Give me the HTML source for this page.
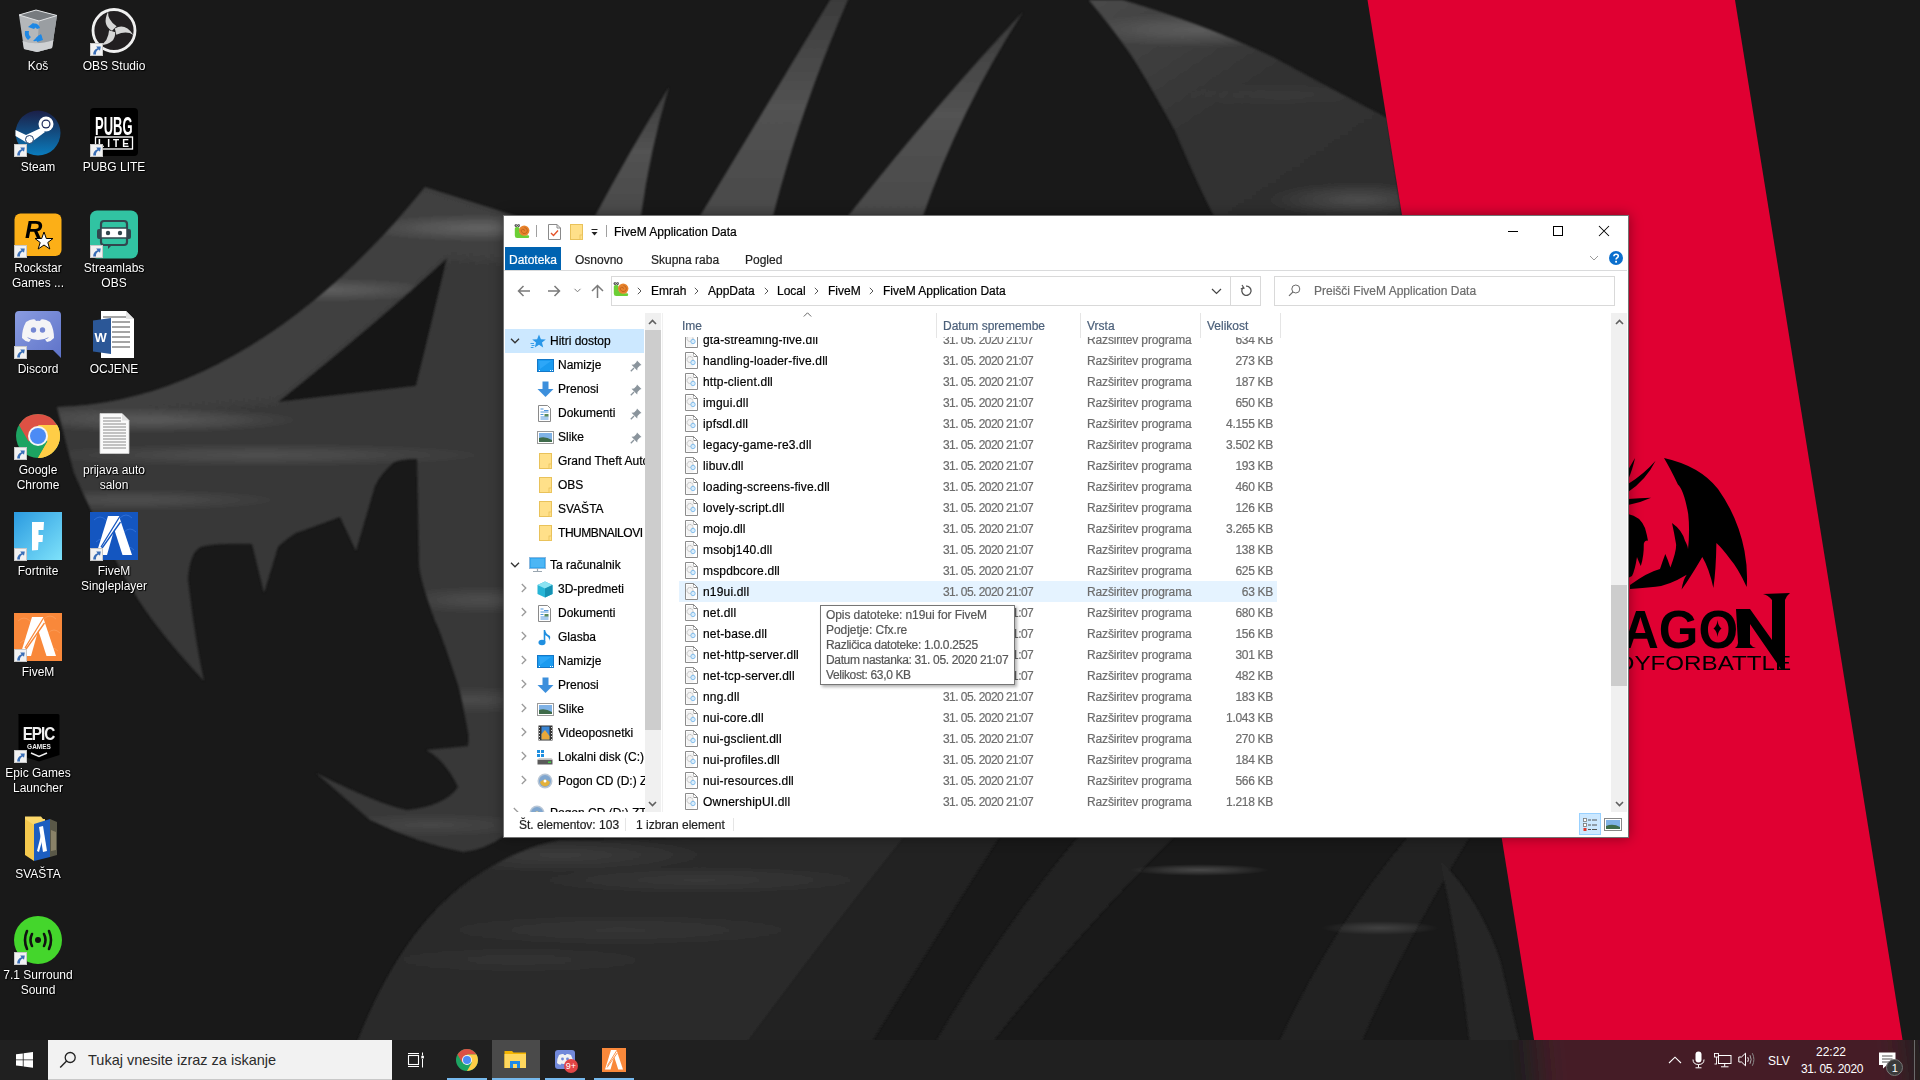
<!DOCTYPE html>
<html><head><meta charset="utf-8">
<style>
*{margin:0;padding:0;box-sizing:border-box}
html,body{width:1920px;height:1080px;overflow:hidden;background:#191919;font-family:"Liberation Sans",sans-serif;font-size:12px;position:relative}
.a{position:absolute;white-space:nowrap}
svg.a{overflow:visible}
.t{position:absolute;white-space:nowrap;line-height:15px;height:15px;-webkit-text-stroke:0.2px currentColor}
.row span{-webkit-text-stroke:0.2px currentColor}
.lbl{position:absolute;width:76px;text-align:center;color:#fff;line-height:15px;text-shadow:0 0 2px #000,1px 1px 1px #000,0 0 1px #000}
.row{position:absolute;left:663px;width:948px;height:21px;line-height:21px}
.row span{top:1px}
.row .n{position:absolute;left:40px;color:#000;letter-spacing:0.17px}
.row .d{position:absolute;left:280px;color:#6d6d6d;letter-spacing:-0.55px}
.row .v{position:absolute;left:424px;color:#6d6d6d;letter-spacing:-0.15px}
.row .s{position:absolute;left:537px;width:73px;text-align:right;color:#6d6d6d;letter-spacing:-0.3px}
.row svg{position:absolute;left:22px;top:2px}
.nv{position:absolute;left:504px;width:141px;height:24px;line-height:24px;color:#000}
.nv .x{position:absolute}
.nv svg{position:absolute}
</style></head><body>
<svg class="a" style="left:0;top:0;overflow:hidden" width="1920" height="1080" viewBox="0 0 1920 1080">
<defs>
<filter id="b1" x="-5%" y="-5%" width="110%" height="110%"><feGaussianBlur stdDeviation="0.8"/></filter>
<filter id="b3" x="-10%" y="-10%" width="120%" height="120%"><feGaussianBlur stdDeviation="4"/></filter>
<filter id="sh" x="-50%" y="-200%" width="200%" height="500%"><feGaussianBlur stdDeviation="22 3"/></filter>
<filter id="b20" x="-50%" y="-50%" width="200%" height="200%"><feGaussianBlur stdDeviation="25"/></filter>
<clipPath id="cg1"><path id="g1p" d="M425 187 L560 230 L560 330 L540 830 L504 836 Q485 850 463 852 Q417 843 370 820 L316 773 Q380 805 407 810 Q445 806 458 787 Q445 760 426 750 L468 746 Q469 735 468 732 Q460 690 458 685 Q440 630 435 621 Q420 580 419 565 L417 459 Q400 459 393 463 Q380 475 375 486 L356 551 L340 517 Q305 530 296 533 Q285 540 278 547 L264 593 L252 544 Q215 543 201 547 Q190 552 188 579 Q195 640 204 681 Q175 650 153 621 Q130 590 111 551 Q90 510 74 473 Q65 440 57 407 C180 405 310 330 425 187 Z"/></clipPath>
<clipPath id="cd"><path d="M1087 -2 L1116 -2 Q1200 22 1273 57 Q1330 88 1387 118 L1402 216 L1214 216 Q1200 190 1175 131 Q1150 85 1131 55 Q1110 25 1087 -2 Z"/></clipPath>
<linearGradient id="gdw" x1="0" y1="0" x2="1" y2="1"><stop offset="0" stop-color="#4a4a4a"/><stop offset="0.45" stop-color="#333"/><stop offset="1" stop-color="#2c2c2c"/></linearGradient>
<linearGradient id="gsp" x1="0" y1="0" x2="0" y2="1">
<stop offset="0" stop-color="#3a3a3a"/><stop offset="0.5" stop-color="#525252"/><stop offset="1" stop-color="#4a4a4a"/></linearGradient>
<radialGradient id="rgw"><stop offset="0" stop-color="#fff" stop-opacity="1"/><stop offset="0.5" stop-color="#fff" stop-opacity="0.55"/><stop offset="1" stop-color="#fff" stop-opacity="0"/></radialGradient>
</defs>
<rect width="1920" height="1080" fill="#191919"/>
<g filter="url(#b1)">
<g clip-path="url(#cg1)">
<rect x="0" y="150" width="600" height="720" fill="#383838"/>
<path d="M425 187 L560 230 L560 262 Q500 262 447 258 Q380 320 278 402 L40 420 L58 380 Z" fill="#404040" filter="url(#b3)"/>
<g><ellipse cx="480" cy="228" rx="120.0" ry="14.0" fill="url(#rgw)" opacity="0.183"/><ellipse cx="330" cy="290" rx="110.0" ry="12.0" fill="url(#rgw)" opacity="0.158"/><ellipse cx="150" cy="420" rx="150.0" ry="13.0" fill="url(#rgw)" opacity="0.173"/><ellipse cx="260" cy="455" rx="230.0" ry="12.0" fill="url(#rgw)" opacity="0.119"/><ellipse cx="130" cy="500" rx="150.0" ry="11.0" fill="url(#rgw)" opacity="0.114"/><ellipse cx="480" cy="600" rx="90.0" ry="14.0" fill="url(#rgw)" opacity="0.104"/><ellipse cx="470" cy="700" rx="90.0" ry="14.0" fill="url(#rgw)" opacity="0.089"/><ellipse cx="430" cy="825" rx="110.0" ry="12.0" fill="url(#rgw)" opacity="0.074"/></g>
</g>
<path d="M447 258 Q430 330 416 386 L278 402 Q380 320 447 258 Z" fill="#191919"/>
<path d="M669 87 Q650 150 641 216 L595 216 Q630 150 669 87 Z" fill="url(#gsp)"/>
<path d="M833 -5 L850 -5 Q800 110 773 216 L700 216 Q770 100 833 -5 Z" fill="url(#gsp)"/>
<path d="M1023 12 Q960 110 923 216 L848 216 Q940 100 1023 12 Z" fill="url(#gsp)"/>
<g clip-path="url(#cd)">
<rect x="1080" y="0" width="330" height="220" fill="url(#gdw)"/>
<g><ellipse cx="1200" cy="30" rx="120.0" ry="18.0" fill="url(#rgw)" opacity="0.160"/><ellipse cx="1290" cy="95" rx="110.0" ry="12.0" fill="url(#rgw)" opacity="0.035"/><ellipse cx="1360" cy="200" rx="90.0" ry="18.0" fill="url(#rgw)" opacity="0.150"/></g>
</g>
</g>
</g>
<!-- lower regions -->
<clipPath id="cl"><path d="M356 1045 Q400 930 470 880 Q520 846 560 840 L905 836 Q830 930 745 1045 Z"/></clipPath>
<g filter="url(#b1)">
<g clip-path="url(#cl)">
<rect x="340" y="830" width="600" height="220" fill="#2b2b2b"/>
<g><ellipse cx="560" cy="855" rx="150.0" ry="18.0" fill="url(#rgw)" opacity="0.080"/><ellipse cx="700" cy="880" rx="170.0" ry="14.0" fill="url(#rgw)" opacity="0.061"/><ellipse cx="620" cy="930" rx="190.0" ry="16.0" fill="url(#rgw)" opacity="0.047"/><ellipse cx="520" cy="960" rx="150.0" ry="14.0" fill="url(#rgw)" opacity="0.033"/></g>
</g>
<path d="M905 836 L1000 836 Q940 930 870 1045 L745 1045 Q830 930 905 836 Z" fill="#202020"/>
</g>
<g filter="url(#b1)">
<path d="M1079 836 L1175 836 Q1080 930 990 1045 L934 1045 Q1000 930 1079 836 Z" fill="#212121"/>
<path d="M1409 836 L1470 836 Q1400 950 1360 1045 L1278 1045 Q1330 930 1409 836 Z" fill="#232323"/>
<path d="M1440 860 Q1480 900 1500 960 L1520 1045 L1470 1045 Q1460 950 1440 860 Z" fill="#262626"/>
</g>
<g><ellipse cx="1200" cy="870" rx="70.0" ry="6.0" fill="url(#rgw)" opacity="0.210"/><ellipse cx="1380" cy="928" rx="60.0" ry="7.0" fill="url(#rgw)" opacity="0.140"/></g>
<polygon points="1367.5,0 1735,0 1909,1080 1540.5,1080" fill="#e00032"/>
<g fill="#000">
<path d="M1664 458 Q1700 466 1718 489 Q1738 517 1744.5 551 Q1748 570 1746.7 587 Q1738 568 1729.7 558.5 Q1722 548 1716.4 543 Q1716 570 1713.4 588 Q1709 568 1702.3 557 Q1690 578 1681.6 589.6 Q1683 580 1686.7 574.8 Q1668 586 1655.6 586.7 Q1642 588 1630 589 L1630 585 Q1648 572 1660 569 Q1663 560 1665.3 554 Q1668 560 1670.4 567.4 Q1677 550 1676 543.7 Q1674 532 1672 523 Q1682 530 1685 540.7 Q1688 546 1688 549.6 Q1690 530 1688.2 514 Q1684 490 1677.9 484.4 Q1670 468 1664 458 Z"/>
<path d="M1635 458 Q1633 468 1628 480 L1628 470 Z"/>
<path d="M1655.6 460.7 Q1646 480 1628 492 L1628 484 Q1644 474 1655.6 460.7 Z"/>
<path d="M1651 497.8 Q1640 503 1628 505 L1628 499 Q1640 498 1651 497.8 Z"/>
<path d="M1628 514 Q1640 516 1645 528 Q1647 535 1648 540.7 Q1645 540 1643.8 543.7 Q1644 556 1640.8 566 Q1638 560 1637 557 Q1635 570 1632 576 L1628 578 Z"/>
<text x="1622" y="648" font-family="Liberation Sans" font-weight="bold" font-size="53" textLength="116" lengthAdjust="spacingAndGlyphs">AGO</text>
<path d="M1736 609 L1750 609 L1772 640 L1772 600 Q1768 595 1763 594 L1790 593 Q1786 596 1785 600 L1785 669 L1781 669 L1750 624 L1750 644 Q1752 647 1756 648 L1735 648 Q1738 646 1738 643 Z"/>
<text x="1617" y="669.8" font-family="Liberation Sans" font-size="21" textLength="174" lengthAdjust="spacingAndGlyphs">DYFORBATTLE</text>
</g>
<path d="M1717.5 620 Q1718 626 1721.5 628.5 Q1718 631 1717.5 637 Q1717 631 1713.5 628.5 Q1717 626 1717.5 620 Z" fill="#000"/>
</svg>
<svg class="a" style="left:14px;top:7px" width="48" height="50" viewBox="0 0 48 50"><path d="M5 8L22 3L43 8.5L38 41L23 45L10 42Z" fill="#b4b7ba"/><path d="M25 14L43 8.5L38 41L23 45Z" fill="#9a9ea2"/><path d="M5 8L22 3L43 8.5L25 14Z" fill="#777b7f" stroke="#e0e2e4" stroke-width="1"/><path d="M8.5 34Q22 39 39.5 33L38 41L23 45L10 42Z" fill="#cfd1d3"/><g fill="#1e88e5"><path d="M14 20L19 16L23 19L20 22Z"/><path d="M11 24Q10 30 14 33L17 30Q14 28 15 24Z"/><path d="M22 31L27 27L29 33L23 35Z"/><path d="M18 17Q24 15 26 21L23 22Z"/><path d="M19 34Q25 35 28 29L25 28Z"/></g></svg>
<div class="lbl" style="left:0px;top:59px">Koš</div>
<svg class="a" style="left:90px;top:7px" width="48" height="50" viewBox="0 0 48 50"><circle cx="24" cy="23.5" r="21" fill="#221f21" stroke="#f0f0f0" stroke-width="2.8"/><g transform="rotate(8 24 23.5)"><path d="M22 24Q11 20 15.5 5.5Q16 14 26 19Z" fill="#d6d6d6"/><g transform="rotate(120 24 23.5)"><path d="M22 24Q11 20 15.5 5.5Q16 14 26 19Z" fill="#d6d6d6"/></g><g transform="rotate(240 24 23.5)"><path d="M22 24Q11 20 15.5 5.5Q16 14 26 19Z" fill="#d6d6d6"/></g></g><g transform="translate(0,36)"><rect x="0.5" y="0.5" width="12" height="12" fill="#f2f2f2" stroke="#c8c8c8"/><path d="M3.2 11.5Q3 7 7.5 5.2L6.2 3.6L10.8 3.5L10 7.8L8.8 6.6Q5.5 8 6 11.5Z" fill="#3a6fb8"/></g></svg>
<div class="lbl" style="left:76px;top:59px">OBS Studio</div>
<svg class="a" style="left:14px;top:108px" width="48" height="50" viewBox="0 0 48 50"><defs><linearGradient id="stg" x1="0" y1="0" x2="0" y2="1"><stop offset="0" stop-color="#1b1f47"/><stop offset="1" stop-color="#0a7cbd"/></linearGradient></defs><circle cx="24" cy="25" r="22.5" fill="url(#stg)"/><circle cx="32" cy="16" r="7.5" fill="#fff"/><circle cx="32" cy="16" r="4.5" fill="#1d2a5a"/><circle cx="32" cy="16" r="3.3" fill="#fff"/><path d="M1.5 22L12 27L27 20L31 24L19 33Q14 37 10 33L1.5 28Z" fill="#fff"/><circle cx="15.5" cy="31.5" r="4" fill="#fff" stroke="#1d3c6a" stroke-width="1"/><g transform="translate(0,36)"><rect x="0.5" y="0.5" width="12" height="12" fill="#f2f2f2" stroke="#c8c8c8"/><path d="M3.2 11.5Q3 7 7.5 5.2L6.2 3.6L10.8 3.5L10 7.8L8.8 6.6Q5.5 8 6 11.5Z" fill="#3a6fb8"/></g></svg>
<div class="lbl" style="left:0px;top:160px">Steam</div>
<svg class="a" style="left:90px;top:108px" width="48" height="50" viewBox="0 0 48 50"><rect x="0" y="0" width="48" height="48" rx="4" fill="#000"/><text x="5" y="26.5" font-family="Liberation Sans" font-weight="bold" font-size="25" fill="#fff" textLength="37.5" lengthAdjust="spacingAndGlyphs">PUBG</text><rect x="5.5" y="29" width="37" height="12" fill="none" stroke="#fff" stroke-width="1.3"/><text x="8" y="38.8" font-family="Liberation Sans" font-weight="bold" font-size="10" fill="#fff" textLength="31" lengthAdjust="spacing">LITE</text><g transform="translate(0,36)"><rect x="0.5" y="0.5" width="12" height="12" fill="#f2f2f2" stroke="#c8c8c8"/><path d="M3.2 11.5Q3 7 7.5 5.2L6.2 3.6L10.8 3.5L10 7.8L8.8 6.6Q5.5 8 6 11.5Z" fill="#3a6fb8"/></g></svg>
<div class="lbl" style="left:76px;top:160px">PUBG LITE</div>
<svg class="a" style="left:14px;top:209px" width="48" height="50" viewBox="0 0 48 50"><rect x="0.5" y="4.5" width="47" height="42.5" rx="6" fill="#fcaf17"/><text x="11" y="29" font-family="Liberation Sans" font-style="italic" font-weight="bold" font-size="24" fill="#000">R</text><path d="M30 23L32.3 29.5L39 29.5L33.8 33.5L35.8 40L30 36L24.2 40L26.2 33.5L21 29.5L27.7 29.5Z" fill="#fff" stroke="#000" stroke-width="1"/><g transform="translate(0,36)"><rect x="0.5" y="0.5" width="12" height="12" fill="#f2f2f2" stroke="#c8c8c8"/><path d="M3.2 11.5Q3 7 7.5 5.2L6.2 3.6L10.8 3.5L10 7.8L8.8 6.6Q5.5 8 6 11.5Z" fill="#3a6fb8"/></g></svg>
<div class="lbl" style="left:0px;top:261px">Rockstar<br>Games ...</div>
<svg class="a" style="left:90px;top:209px" width="48" height="50" viewBox="0 0 48 50"><rect x="0" y="1.5" width="48" height="48" rx="7" fill="#31c3a2"/><rect x="11" y="12" width="26" height="24" rx="3" fill="none" stroke="#32464e" stroke-width="2.2"/><rect x="7" y="20" width="5" height="10" rx="2" fill="#32464e"/><rect x="36" y="20" width="5" height="10" rx="2" fill="#32464e"/><rect x="11" y="19" width="26" height="10" fill="#fff" stroke="#32464e" stroke-width="1.5"/><circle cx="18" cy="24" r="2.2" fill="#32464e"/><circle cx="30" cy="24" r="2.2" fill="#32464e"/><path d="M18 36L18 40L22 36Z" fill="#32464e"/><g transform="translate(0,36)"><rect x="0.5" y="0.5" width="12" height="12" fill="#f2f2f2" stroke="#c8c8c8"/><path d="M3.2 11.5Q3 7 7.5 5.2L6.2 3.6L10.8 3.5L10 7.8L8.8 6.6Q5.5 8 6 11.5Z" fill="#3a6fb8"/></g></svg>
<div class="lbl" style="left:76px;top:261px">Streamlabs<br>OBS</div>
<svg class="a" style="left:14px;top:310px" width="48" height="50" viewBox="0 0 48 50"><defs><linearGradient id="dcg" x1="0" y1="0" x2="1" y2="1"><stop offset="0" stop-color="#8a9ce0"/><stop offset="1" stop-color="#5e73c9"/></linearGradient></defs><path d="M5 1H43Q47 1 47 5V48L39 40H5Q1 40 1 36V5Q1 1 5 1Z" fill="url(#dcg)"/><path d="M12 12Q17 8.5 21 9.5L22 11Q24 10.6 26 11L27 9.5Q31 8.5 36 12Q40 19 40 28Q37 31.5 33 32L31 29.5Q34 28.5 35 27Q30 30 24 30Q18 30 13 27Q14 28.5 17 29.5L15 32Q11 31.5 8 28Q8 19 12 12Z" fill="#f4f4f6"/><circle cx="19.5" cy="20" r="2.7" fill="#7487d3"/><circle cx="28.5" cy="20" r="2.7" fill="#7487d3"/><g transform="translate(0,36)"><rect x="0.5" y="0.5" width="12" height="12" fill="#f2f2f2" stroke="#c8c8c8"/><path d="M3.2 11.5Q3 7 7.5 5.2L6.2 3.6L10.8 3.5L10 7.8L8.8 6.6Q5.5 8 6 11.5Z" fill="#3a6fb8"/></g></svg>
<div class="lbl" style="left:0px;top:362px">Discord</div>
<svg class="a" style="left:90px;top:310px" width="48" height="50" viewBox="0 0 48 50"><path d="M11 1H36L44 9V48H11Z" fill="#fff"/><path d="M36 1V9H44Z" fill="#e6e6e6"/><g stroke="#888" stroke-width="1.3"><path d="M13 7H36M22 12H40M22 17H40M22 22H40M22 27H40M22 32H40M22 37H40"/></g><path d="M3 10.5L21 8V44L3 41.5Z" fill="#2b5797"/><text x="4.5" y="32" font-family="Liberation Sans" font-weight="bold" font-size="13" fill="#fff">W</text></svg>
<div class="lbl" style="left:76px;top:362px">OCJENE</div>
<svg class="a" style="left:14px;top:411px" width="48" height="50" viewBox="0 0 48 50"><circle cx="24" cy="25" r="22" fill="#1da462"/><path d="M24 3A22 22 0 0 1 43 14L24 14Z" fill="#dd5144"/><path d="M5 14A22 22 0 0 1 24 3L24 14L33.5 14L24 25L14.5 30.5Z" fill="#dd5144"/><path d="M43 14A22 22 0 0 1 24 47L33.5 30.5L33.5 14Z" fill="#ffcd46"/><path d="M43 14L24 14L33.5 30.5L24 47A22 22 0 0 0 43 14Z" fill="#ffcd46"/><circle cx="24" cy="25" r="10" fill="#f5f5f5"/><circle cx="24" cy="25" r="8" fill="#4c8bf5"/><g transform="translate(0,36)"><rect x="0.5" y="0.5" width="12" height="12" fill="#f2f2f2" stroke="#c8c8c8"/><path d="M3.2 11.5Q3 7 7.5 5.2L6.2 3.6L10.8 3.5L10 7.8L8.8 6.6Q5.5 8 6 11.5Z" fill="#3a6fb8"/></g></svg>
<div class="lbl" style="left:0px;top:463px">Google<br>Chrome</div>
<svg class="a" style="left:90px;top:411px" width="48" height="50" viewBox="0 0 48 50"><path d="M10 2.5H32L39 9.5V42.5H10Z" fill="#fafafa" stroke="#d0d0d0" stroke-width="0.8"/><path d="M32 2.5V9.5H39Z" fill="#e0e0e0"/><g stroke="#8a8a8a" stroke-width="1"><path d="M13 7H31M13 10H31M13 13H36M13 16H36M13 19H36M13 22H36M13 25H36M13 28H36M13 31H36M13 34H36M13 37H36"/></g></svg>
<div class="lbl" style="left:76px;top:463px">prijava auto<br>salon</div>
<svg class="a" style="left:14px;top:512px" width="48" height="50" viewBox="0 0 48 50"><defs><linearGradient id="fng" x1="0" y1="0" x2="1" y2="1"><stop offset="0" stop-color="#2a9ae0"/><stop offset="1" stop-color="#7ee2fa"/></linearGradient></defs><rect x="0" y="0" width="48" height="48" fill="url(#fng)"/><path d="M18 10H30L29.5 18H24.5L24.5 23H29L28.5 30H24.5L24 38L18 38.5Z" fill="#fff"/><g transform="translate(0,36)"><rect x="0.5" y="0.5" width="12" height="12" fill="#f2f2f2" stroke="#c8c8c8"/><path d="M3.2 11.5Q3 7 7.5 5.2L6.2 3.6L10.8 3.5L10 7.8L8.8 6.6Q5.5 8 6 11.5Z" fill="#3a6fb8"/></g></svg>
<div class="lbl" style="left:0px;top:564px">Fortnite</div>
<svg class="a" style="left:90px;top:512px" width="48" height="50" viewBox="0 0 48 50"><rect x="0" y="0" width="48" height="48" fill="#1456c0"/><g fill="none" stroke="#2f6fd6" stroke-width="1"><path d="M4 8Q10 2 16 8M30 6Q36 0 42 6M6 30Q12 24 18 30M32 38Q38 32 44 38M34 20Q40 14 46 20"/></g><path d="M20 4H29L42 43H32.5Z" fill="#fff"/><path d="M18 4L28 4L17 43L6 43Z" fill="#fff"/><path d="M29.5 5L11 35M30.5 10L10 39" stroke="#1456c0" stroke-width="1.3"/><g transform="translate(0,36)"><rect x="0.5" y="0.5" width="12" height="12" fill="#f2f2f2" stroke="#c8c8c8"/><path d="M3.2 11.5Q3 7 7.5 5.2L6.2 3.6L10.8 3.5L10 7.8L8.8 6.6Q5.5 8 6 11.5Z" fill="#3a6fb8"/></g></svg>
<div class="lbl" style="left:76px;top:564px">FiveM<br>Singleplayer</div>
<svg class="a" style="left:14px;top:613px" width="48" height="50" viewBox="0 0 48 50"><rect x="0" y="0" width="48" height="48" fill="#f9883a"/><g fill="none" stroke="#fb9a55" stroke-width="1"><path d="M4 8Q10 2 16 8M30 6Q36 0 42 6M6 30Q12 24 18 30M32 38Q38 32 44 38M34 20Q40 14 46 20"/></g><path d="M20 4H29L42 43H32.5Z" fill="#fff"/><path d="M18 4L28 4L17 43L6 43Z" fill="#fff"/><path d="M29.5 5L11 35M30.5 10L10 39" stroke="#f9883a" stroke-width="1.3"/><g transform="translate(0,36)"><rect x="0.5" y="0.5" width="12" height="12" fill="#f2f2f2" stroke="#c8c8c8"/><path d="M3.2 11.5Q3 7 7.5 5.2L6.2 3.6L10.8 3.5L10 7.8L8.8 6.6Q5.5 8 6 11.5Z" fill="#3a6fb8"/></g></svg>
<div class="lbl" style="left:0px;top:665px">FiveM</div>
<svg class="a" style="left:14px;top:714px" width="48" height="50" viewBox="0 0 48 50"><path d="M4 0H44Q45.5 0 45.5 1.5V41L25 47.5L4.5 41V1.5Q4.5 0 4 0Z" fill="#000"/><text x="24.5" y="26" text-anchor="middle" font-family="Liberation Sans" font-weight="bold" font-size="18" fill="#f0f0f0" letter-spacing="-1.2" transform="translate(24.5,0) scale(0.85,1) translate(-24.5,0)">EPIC</text><text x="25" y="35" text-anchor="middle" font-family="Liberation Sans" font-weight="bold" font-size="6.5" fill="#f0f0f0">GAMES</text><path d="M17 39L25 42.5L33 39" fill="none" stroke="#f0f0f0" stroke-width="1.5"/><g transform="translate(0,36)"><rect x="0.5" y="0.5" width="12" height="12" fill="#f2f2f2" stroke="#c8c8c8"/><path d="M3.2 11.5Q3 7 7.5 5.2L6.2 3.6L10.8 3.5L10 7.8L8.8 6.6Q5.5 8 6 11.5Z" fill="#3a6fb8"/></g></svg>
<div class="lbl" style="left:0px;top:766px">Epic Games<br>Launcher</div>
<svg class="a" style="left:14px;top:815px" width="48" height="50" viewBox="0 0 48 50"><path d="M11 1.5H27L29 4H31V40H11Z" fill="#fcd86a"/><path d="M11 40L20 46V10L11 4Z" fill="#f5c94e"/><path d="M20 9L36 4V42L20 46Z" fill="#1d5ec0"/><path d="M25 12L29 11L33 36L29 37Z" fill="#fff"/><path d="M23 36L27 20L28 26L25 37Z" fill="#fff"/><path d="M36 4L43 7V40L36 42Z" fill="#5a5848"/><path d="M37 15L42 17V35L37 36Z" fill="#8a8268"/></svg>
<div class="lbl" style="left:0px;top:867px">SVAŠTA</div>
<svg class="a" style="left:14px;top:916px" width="48" height="50" viewBox="0 0 48 50"><circle cx="24" cy="24" r="24" fill="#44d62c"/><circle cx="24" cy="24" r="3" fill="#111"/><g fill="none" stroke="#111" stroke-width="2.6" stroke-linecap="round"><path d="M18 18Q15 24 18 30"/><path d="M30 18Q33 24 30 30"/><path d="M13 15Q9 24 13 33"/><path d="M35 15Q39 24 35 33"/></g><g transform="translate(0,36)"><rect x="0.5" y="0.5" width="12" height="12" fill="#f2f2f2" stroke="#c8c8c8"/><path d="M3.2 11.5Q3 7 7.5 5.2L6.2 3.6L10.8 3.5L10 7.8L8.8 6.6Q5.5 8 6 11.5Z" fill="#3a6fb8"/></g></svg>
<div class="lbl" style="left:0px;top:968px">7.1 Surround<br>Sound</div><div class="a" style="left:503px;top:215px;width:1126px;height:623px;background:#fff;border:1px solid rgba(0,0,0,0.55);box-shadow:0 0 12px rgba(0,0,0,0.4)"></div>
<svg class="a" style="left:514px;top:224px" width="16" height="15" viewBox="0 0 16 15"><g><path d="M0.8 4.5Q0.8 3 2.5 3L4 3Q5.5 3 5.6 4.6L5.8 9Q7 11.2 10 11.2L14.5 11.2Q15.6 12.2 15 13.4Q14.5 14 13 14L3.2 14Q0.8 14 0.8 11.5Z" fill="#6ccf36"/><circle cx="10.2" cy="6.6" r="5.2" fill="#e8832c"/><path d="M10.4 3.6a3 3 0 1 1 -2.8 4.2a1.6 1.6 0 1 1 2.9 -0.9" fill="none" stroke="#b95d1a" stroke-width="0.8"/><circle cx="2" cy="1.6" r="1.4" fill="#3b3b3b"/><circle cx="4.6" cy="1.6" r="1.4" fill="#3b3b3b"/><circle cx="2.2" cy="1.4" r="0.5" fill="#fff"/><circle cx="4.8" cy="1.4" r="0.5" fill="#fff"/></g></svg>
<div class="a" style="left:536px;top:225px;width:1px;height:12px;background:#a0a0a0"></div>
<svg class="a" style="left:548px;top:224px" width="13" height="16" viewBox="0 0 13 16"><path d="M0.5 0.5H9L12.5 4V15.5H0.5Z" fill="#fff" stroke="#8a8a8a"/><path d="M9 0.5V4H12.5" fill="none" stroke="#8a8a8a"/><path d="M3 9L5.5 11.5L10 6.5" fill="none" stroke="#e5532a" stroke-width="1.4"/></svg>
<svg class="a" style="left:570px;top:224px" width="14" height="16" viewBox="0 0 14 16"><rect x="0.5" y="0.5" width="12" height="15" fill="#ffe089" stroke="#e9c25a"/><rect x="10" y="11" width="2.5" height="4.5" fill="#ffe089" stroke="#e9c25a" stroke-width="0.8"/></svg>
<svg class="a" style="left:591px;top:229px" width="8" height="8" viewBox="0 0 8 8"><rect x="0.5" y="0" width="6" height="1" fill="#222"/><path d="M0.5 3H6.5L3.5 6.5Z" fill="#222"/></svg>
<div class="a" style="left:606px;top:225px;width:1px;height:12px;background:#a0a0a0"></div>
<div class="t" style="left:614px;top:225px;color:#000">FiveM Application Data</div>
<div class="a" style="left:1508px;top:231px;width:10px;height:1px;background:#000"></div>
<div class="a" style="left:1553px;top:226px;width:10px;height:10px;border:1px solid #000"></div>
<svg class="a" style="left:1598px;top:225px" width="12" height="12" viewBox="0 0 12 12"><path d="M1 1L11 11M11 1L1 11" stroke="#000" stroke-width="1.05"/></svg>
<div class="a" style="left:505px;top:247px;width:56px;height:23px;background:#0063b1"></div>
<div class="t" style="left:509px;top:253px;color:#fff">Datoteka</div>
<div class="t" style="left:575px;top:253px;color:#222">Osnovno</div>
<div class="t" style="left:651px;top:253px;color:#222">Skupna raba</div>
<div class="t" style="left:745px;top:253px;color:#222">Pogled</div>
<div class="a" style="left:504px;top:270px;width:1123px;height:1px;background:#dadbdc"></div>
<svg class="a" style="left:1589px;top:255px" width="10" height="6" viewBox="0 0 10 6"><path d="M1 1L5 5L9 1" fill="none" stroke="#9a9a9a" stroke-width="1"/></svg>
<svg class="a" style="left:1609px;top:251px" width="15" height="15" viewBox="0 0 15 15"><circle cx="7" cy="7" r="7" fill="#0b6fcd"/><path d="M4.9 5.3Q4.9 3.2 7.1 3.2Q9.3 3.2 9.3 5.1Q9.3 6.3 7.9 7Q7.1 7.4 7.1 8.6" fill="none" stroke="#fff" stroke-width="1.6"/><rect x="6.2" y="9.8" width="1.8" height="1.8" fill="#fff"/></svg>
<svg class="a" style="left:517px;top:285px" width="14" height="12" viewBox="0 0 14 12"><path d="M13 6H1.5M6.5 1L1.5 6L6.5 11" fill="none" stroke="#7a7a7a" stroke-width="1.5"/></svg>
<svg class="a" style="left:547px;top:285px" width="14" height="12" viewBox="0 0 14 12"><path d="M1 6H12.5M7.5 1L12.5 6L7.5 11" fill="none" stroke="#7a7a7a" stroke-width="1.5"/></svg>
<svg class="a" style="left:574px;top:288px" width="7" height="5" viewBox="0 0 7 5"><path d="M0.5 0.8L3.5 3.8L6.5 0.8" fill="none" stroke="#7a7a7a" stroke-width="1"/></svg>
<svg class="a" style="left:591px;top:284px" width="13" height="14" viewBox="0 0 13 14"><path d="M6.5 14V1.5M1 7L6.5 1.5L12 7" fill="none" stroke="#7a7a7a" stroke-width="1.5"/></svg>
<div class="a" style="left:611px;top:276px;width:650px;height:30px;border:1px solid #d9d9d9"></div>
<div class="a" style="left:1230px;top:277px;width:1px;height:28px;background:#d9d9d9"></div>
<svg class="a" style="left:613px;top:282px" width="16" height="15" viewBox="0 0 16 15"><g><path d="M0.8 4.5Q0.8 3 2.5 3L4 3Q5.5 3 5.6 4.6L5.8 9Q7 11.2 10 11.2L14.5 11.2Q15.6 12.2 15 13.4Q14.5 14 13 14L3.2 14Q0.8 14 0.8 11.5Z" fill="#6ccf36"/><circle cx="10.2" cy="6.6" r="5.2" fill="#e8832c"/><path d="M10.4 3.6a3 3 0 1 1 -2.8 4.2a1.6 1.6 0 1 1 2.9 -0.9" fill="none" stroke="#b95d1a" stroke-width="0.8"/><circle cx="2" cy="1.6" r="1.4" fill="#3b3b3b"/><circle cx="4.6" cy="1.6" r="1.4" fill="#3b3b3b"/><circle cx="2.2" cy="1.4" r="0.5" fill="#fff"/><circle cx="4.8" cy="1.4" r="0.5" fill="#fff"/></g></svg>
<svg class="a" style="left:637px;top:287px" width="5" height="8" viewBox="0 0 5 8"><path d="M0.8 0.8L4 4L0.8 7.2" fill="none" stroke="#555" stroke-width="1"/></svg>
<div class="t" style="left:651px;top:284px;color:#000">Emrah</div>
<svg class="a" style="left:694px;top:287px" width="5" height="8" viewBox="0 0 5 8"><path d="M0.8 0.8L4 4L0.8 7.2" fill="none" stroke="#555" stroke-width="1"/></svg>
<div class="t" style="left:708px;top:284px;color:#000">AppData</div>
<svg class="a" style="left:764px;top:287px" width="5" height="8" viewBox="0 0 5 8"><path d="M0.8 0.8L4 4L0.8 7.2" fill="none" stroke="#555" stroke-width="1"/></svg>
<div class="t" style="left:777px;top:284px;color:#000">Local</div>
<svg class="a" style="left:814px;top:287px" width="5" height="8" viewBox="0 0 5 8"><path d="M0.8 0.8L4 4L0.8 7.2" fill="none" stroke="#555" stroke-width="1"/></svg>
<div class="t" style="left:828px;top:284px;color:#000">FiveM</div>
<svg class="a" style="left:869px;top:287px" width="5" height="8" viewBox="0 0 5 8"><path d="M0.8 0.8L4 4L0.8 7.2" fill="none" stroke="#555" stroke-width="1"/></svg>
<div class="t" style="left:883px;top:284px;color:#000">FiveM Application Data</div>
<svg class="a" style="left:1211px;top:288px" width="11" height="7" viewBox="0 0 11 7"><path d="M1 1L5.5 5.5L10 1" fill="none" stroke="#444" stroke-width="1.2"/></svg>
<svg class="a" style="left:1240px;top:284px" width="12" height="13" viewBox="0 0 12 13"><path d="M3.2 3.5A4.6 4.6 0 1 0 6 2.2" fill="none" stroke="#555" stroke-width="1.3"/><path d="M2 1L4 4L0.8 4.8" fill="none" stroke="#555" stroke-width="1.2"/></svg>
<div class="a" style="left:1274px;top:276px;width:341px;height:30px;border:1px solid #d9d9d9"></div>
<svg class="a" style="left:1288px;top:284px" width="13" height="13" viewBox="0 0 13 13"><circle cx="7.8" cy="5" r="4" fill="none" stroke="#6a6a6a" stroke-width="1"/><path d="M5 7.8L1 11.8" stroke="#6a6a6a" stroke-width="1.2"/></svg>
<div class="t" style="left:1314px;top:284px;color:#6d6d6d">Preišči FiveM Application Data</div>
<div class="a" style="left:505px;top:329px;width:139px;height:24px;background:#cce8ff"></div>
<div class="a" style="left:504px;top:313px;width:141px;height:499px;overflow:hidden">
<svg class="a" style="left:6px;top:25px" width="10" height="6" viewBox="0 0 10 6"><path d="M1 0.8L5 4.8L9 0.8" fill="none" stroke="#333" stroke-width="1.3"/></svg>
<svg class="a" style="left:26px;top:21px" width="16" height="15" viewBox="0 0 16 15"><path d="M9 0.5L10.9 5.2L15.8 5.5L12 8.6L13.2 13.5L9 10.8L4.8 13.5L6 8.6L2.2 5.5L7.1 5.2Z" fill="#2a97e8"/><path d="M0.5 9.5H4M1.5 11.5H4.5M0.8 13.5H3.5" stroke="#2a97e8" stroke-width="0.9"/></svg>
<div class="t" style="left:46px;top:21px;color:#000;letter-spacing:0px">Hitri dostop</div>
<svg class="a" style="left:33px;top:46px" width="17" height="13" viewBox="0 0 17 13"><rect x="0.5" y="0.5" width="16" height="12" fill="#1a9bf0" stroke="#1478c8"/><path d="M2 11.5h1M13 11.5h1M15 11.5h1" stroke="#fff"/><path d="M2 2H14L3 10Z" fill="#3fb3ff" opacity="0.5"/></svg>
<div class="t" style="left:54px;top:45px;color:#000;letter-spacing:0px">Namizje</div>
<svg class="a" style="left:126px;top:47px" width="12" height="12" viewBox="0 0 12 12"><path d="M7 0.5L11.5 5L10 5.5L7.5 8L7.2 10.5L1.5 4.8L4 4.5L6.5 2Z" fill="#8a949c"/><path d="M4 8L0.8 11.2" stroke="#8a949c" stroke-width="1.3"/></svg>
<svg class="a" style="left:33px;top:68px" width="17" height="17" viewBox="0 0 17 17"><path d="M5.5 0.5H11.5V8H16.5L8.5 16L0.5 8H5.5Z" fill="#3c8fdc"/></svg>
<div class="t" style="left:54px;top:69px;color:#000;letter-spacing:0px">Prenosi</div>
<svg class="a" style="left:126px;top:71px" width="12" height="12" viewBox="0 0 12 12"><path d="M7 0.5L11.5 5L10 5.5L7.5 8L7.2 10.5L1.5 4.8L4 4.5L6.5 2Z" fill="#8a949c"/><path d="M4 8L0.8 11.2" stroke="#8a949c" stroke-width="1.3"/></svg>
<svg class="a" style="left:34px;top:92px" width="13" height="17" viewBox="0 0 13 17"><path d="M0.5 0.5H9.5L12.5 3.5V16.5H0.5Z" fill="#fff" stroke="#8a8a8a"/><path d="M2.5 4h3M6 5.5h4.5M2.5 7h8M2.5 9.5h3M2.5 12h8M2.5 14h8" stroke="#3b8ad8" stroke-width="0.9"/><rect x="6.5" y="9" width="4" height="2.5" fill="#5a8a5a"/></svg>
<div class="t" style="left:54px;top:93px;color:#000;letter-spacing:0px">Dokumenti</div>
<svg class="a" style="left:126px;top:95px" width="12" height="12" viewBox="0 0 12 12"><path d="M7 0.5L11.5 5L10 5.5L7.5 8L7.2 10.5L1.5 4.8L4 4.5L6.5 2Z" fill="#8a949c"/><path d="M4 8L0.8 11.2" stroke="#8a949c" stroke-width="1.3"/></svg>
<svg class="a" style="left:33px;top:118px" width="17" height="13" viewBox="0 0 17 13"><rect x="0.5" y="0.5" width="16" height="12" fill="#fff" stroke="#9a9a9a"/><rect x="2" y="2" width="13" height="9" fill="#7fb2e6"/><path d="M2 7Q8 5 15 9V11H2Z" fill="#3e6b4a"/></svg>
<div class="t" style="left:54px;top:117px;color:#000;letter-spacing:0px">Slike</div>
<svg class="a" style="left:126px;top:119px" width="12" height="12" viewBox="0 0 12 12"><path d="M7 0.5L11.5 5L10 5.5L7.5 8L7.2 10.5L1.5 4.8L4 4.5L6.5 2Z" fill="#8a949c"/><path d="M4 8L0.8 11.2" stroke="#8a949c" stroke-width="1.3"/></svg>
<svg class="a" style="left:35px;top:140px" width="14" height="17" viewBox="0 0 14 17"><rect x="0.5" y="0.5" width="12" height="15" fill="#ffe089" stroke="#e9c25a"/><rect x="10" y="11" width="2.5" height="4.5" fill="#ffe089" stroke="#e9c25a" stroke-width="0.8"/></svg>
<div class="t" style="left:54px;top:141px;color:#000;letter-spacing:0px">Grand Theft Auto V</div>
<svg class="a" style="left:35px;top:164px" width="14" height="17" viewBox="0 0 14 17"><rect x="0.5" y="0.5" width="12" height="15" fill="#ffe089" stroke="#e9c25a"/><rect x="10" y="11" width="2.5" height="4.5" fill="#ffe089" stroke="#e9c25a" stroke-width="0.8"/></svg>
<div class="t" style="left:54px;top:165px;color:#000;letter-spacing:0px">OBS</div>
<svg class="a" style="left:35px;top:188px" width="14" height="17" viewBox="0 0 14 17"><rect x="0.5" y="0.5" width="12" height="15" fill="#ffe089" stroke="#e9c25a"/><rect x="10" y="11" width="2.5" height="4.5" fill="#ffe089" stroke="#e9c25a" stroke-width="0.8"/></svg>
<div class="t" style="left:54px;top:189px;color:#000;letter-spacing:0px">SVAŠTA</div>
<svg class="a" style="left:35px;top:212px" width="14" height="17" viewBox="0 0 14 17"><rect x="0.5" y="0.5" width="12" height="15" fill="#ffe089" stroke="#e9c25a"/><rect x="10" y="11" width="2.5" height="4.5" fill="#ffe089" stroke="#e9c25a" stroke-width="0.8"/></svg>
<div class="t" style="left:54px;top:213px;color:#000;letter-spacing:-0.45px">THUMBNAILOVI</div>
<svg class="a" style="left:6px;top:249px" width="10" height="6" viewBox="0 0 10 6"><path d="M1 0.8L5 4.8L9 0.8" fill="none" stroke="#333" stroke-width="1.3"/></svg>
<svg class="a" style="left:25px;top:244px" width="17" height="16" viewBox="0 0 17 16"><rect x="0.5" y="0.5" width="16" height="11" fill="#1d9be8" stroke="#8ab8de"/><rect x="1.5" y="1.5" width="14" height="9" fill="#4cb6f5"/><path d="M8.5 11.5V14M4 14.5H13" stroke="#9aa6b0" stroke-width="1.2"/></svg>
<div class="t" style="left:46px;top:245px;color:#000;letter-spacing:0px">Ta računalnik</div>
<svg class="a" style="left:17px;top:270px" width="6" height="10" viewBox="0 0 6 10"><path d="M0.8 1L4.8 5L0.8 9" fill="none" stroke="#9a9a9a" stroke-width="1.3"/></svg>
<svg class="a" style="left:33px;top:268px" width="16" height="17" viewBox="0 0 16 17"><path d="M8 0.5L15.5 4V13L8 16.5L0.5 13V4Z" fill="#27b5d6"/><path d="M0.5 4L8 7.5L15.5 4L8 0.5Z" fill="#8be3f2"/><path d="M8 7.5V16.5L15.5 13V4Z" fill="#1592b3"/></svg>
<div class="t" style="left:54px;top:269px;color:#000;letter-spacing:0px">3D-predmeti</div>
<svg class="a" style="left:17px;top:294px" width="6" height="10" viewBox="0 0 6 10"><path d="M0.8 1L4.8 5L0.8 9" fill="none" stroke="#9a9a9a" stroke-width="1.3"/></svg>
<svg class="a" style="left:34px;top:292px" width="13" height="17" viewBox="0 0 13 17"><path d="M0.5 0.5H9.5L12.5 3.5V16.5H0.5Z" fill="#fff" stroke="#8a8a8a"/><path d="M2.5 4h3M6 5.5h4.5M2.5 7h8M2.5 9.5h3M2.5 12h8M2.5 14h8" stroke="#3b8ad8" stroke-width="0.9"/><rect x="6.5" y="9" width="4" height="2.5" fill="#5a8a5a"/></svg>
<div class="t" style="left:54px;top:293px;color:#000;letter-spacing:0px">Dokumenti</div>
<svg class="a" style="left:17px;top:318px" width="6" height="10" viewBox="0 0 6 10"><path d="M0.8 1L4.8 5L0.8 9" fill="none" stroke="#9a9a9a" stroke-width="1.3"/></svg>
<svg class="a" style="left:34px;top:316px" width="14" height="17" viewBox="0 0 14 17"><path d="M6.5 1V13" stroke="#1f8fe0" stroke-width="1.6"/><ellipse cx="4" cy="13.5" rx="3.5" ry="2.8" fill="#1f8fe0"/><path d="M6.5 1Q8 5 12 7Q13 9 11 12Q12 8 7 6" fill="#1f8fe0"/></svg>
<div class="t" style="left:54px;top:317px;color:#000;letter-spacing:0px">Glasba</div>
<svg class="a" style="left:17px;top:342px" width="6" height="10" viewBox="0 0 6 10"><path d="M0.8 1L4.8 5L0.8 9" fill="none" stroke="#9a9a9a" stroke-width="1.3"/></svg>
<svg class="a" style="left:33px;top:342px" width="17" height="13" viewBox="0 0 17 13"><rect x="0.5" y="0.5" width="16" height="12" fill="#1a9bf0" stroke="#1478c8"/><path d="M2 11.5h1M13 11.5h1M15 11.5h1" stroke="#fff"/><path d="M2 2H14L3 10Z" fill="#3fb3ff" opacity="0.5"/></svg>
<div class="t" style="left:54px;top:341px;color:#000;letter-spacing:0px">Namizje</div>
<svg class="a" style="left:17px;top:366px" width="6" height="10" viewBox="0 0 6 10"><path d="M0.8 1L4.8 5L0.8 9" fill="none" stroke="#9a9a9a" stroke-width="1.3"/></svg>
<svg class="a" style="left:33px;top:364px" width="17" height="17" viewBox="0 0 17 17"><path d="M5.5 0.5H11.5V8H16.5L8.5 16L0.5 8H5.5Z" fill="#3c8fdc"/></svg>
<div class="t" style="left:54px;top:365px;color:#000;letter-spacing:0px">Prenosi</div>
<svg class="a" style="left:17px;top:390px" width="6" height="10" viewBox="0 0 6 10"><path d="M0.8 1L4.8 5L0.8 9" fill="none" stroke="#9a9a9a" stroke-width="1.3"/></svg>
<svg class="a" style="left:33px;top:390px" width="17" height="13" viewBox="0 0 17 13"><rect x="0.5" y="0.5" width="16" height="12" fill="#fff" stroke="#9a9a9a"/><rect x="2" y="2" width="13" height="9" fill="#7fb2e6"/><path d="M2 7Q8 5 15 9V11H2Z" fill="#3e6b4a"/></svg>
<div class="t" style="left:54px;top:389px;color:#000;letter-spacing:0px">Slike</div>
<svg class="a" style="left:17px;top:414px" width="6" height="10" viewBox="0 0 6 10"><path d="M0.8 1L4.8 5L0.8 9" fill="none" stroke="#9a9a9a" stroke-width="1.3"/></svg>
<svg class="a" style="left:34px;top:412px" width="15" height="16" viewBox="0 0 15 16"><rect x="0.5" y="0.5" width="14" height="15" fill="#333"/><rect x="3.5" y="1.5" width="8" height="13" fill="#3b86d4"/><path d="M3.5 9L7 5L11.5 11V14.5H3.5Z" fill="#e8a93a"/><path d="M1.5 2v1M1.5 5v1M1.5 8v1M1.5 11v1M1.5 14v1M13.5 2v1M13.5 5v1M13.5 8v1M13.5 11v1M13.5 14v1" stroke="#ddd"/></svg>
<div class="t" style="left:54px;top:413px;color:#000;letter-spacing:0px">Videoposnetki</div>
<svg class="a" style="left:17px;top:438px" width="6" height="10" viewBox="0 0 6 10"><path d="M0.8 1L4.8 5L0.8 9" fill="none" stroke="#9a9a9a" stroke-width="1.3"/></svg>
<svg class="a" style="left:33px;top:437px" width="16" height="15" viewBox="0 0 16 15"><rect x="0" y="0" width="3" height="3" fill="#1f8fe0"/><rect x="4" y="0" width="3" height="3" fill="#1f8fe0"/><rect x="0" y="4" width="3" height="3" fill="#1f8fe0"/><rect x="4" y="4" width="3" height="3" fill="#1f8fe0"/><path d="M0.5 9.5H15.5V14.5H0.5Z" fill="#5a5a5a"/><path d="M2 8H14.5L15.5 9.5H0.5Z" fill="#cfcfcf"/><rect x="11" y="11.5" width="3" height="1.5" fill="#45d045"/></svg>
<div class="t" style="left:54px;top:437px;color:#000;letter-spacing:0px">Lokalni disk (C:)</div>
<svg class="a" style="left:17px;top:462px" width="6" height="10" viewBox="0 0 6 10"><path d="M0.8 1L4.8 5L0.8 9" fill="none" stroke="#9a9a9a" stroke-width="1.3"/></svg>
<svg class="a" style="left:33px;top:460px" width="16" height="16" viewBox="0 0 16 16"><circle cx="8" cy="8" r="7.5" fill="#b9c7d6"/><circle cx="8" cy="8" r="6" fill="#7fa6cf"/><path d="M3 9Q8 4 13 9Q12 13 8 13.5Q4 13 3 9Z" fill="#e3b13a"/><circle cx="8" cy="8" r="1.5" fill="#fff"/></svg>
<div class="t" style="left:54px;top:461px;color:#000;letter-spacing:0px">Pogon CD (D:) ZTE</div>
<svg class="a" style="left:9px;top:494px" width="6" height="10" viewBox="0 0 6 10"><path d="M0.8 1L4.8 5L0.8 9" fill="none" stroke="#9a9a9a" stroke-width="1.3"/></svg>
<svg class="a" style="left:25px;top:492px" width="16" height="16" viewBox="0 0 16 16"><circle cx="8" cy="8" r="7.5" fill="#b9c7d6"/><circle cx="8" cy="8" r="6" fill="#7fa6cf"/><path d="M3 9Q8 4 13 9Q12 13 8 13.5Q4 13 3 9Z" fill="#e3b13a"/><circle cx="8" cy="8" r="1.5" fill="#fff"/></svg>
<div class="t" style="left:46px;top:493px;color:#000;letter-spacing:0px">Pogon CD (D:) ZTE</div>
</div>
<div class="a" style="left:645px;top:313px;width:16px;height:499px;background:#f0f0f0"></div>
<div class="a" style="left:645px;top:330px;width:16px;height:400px;background:#cdcdcd"></div>
<svg class="a" style="left:648px;top:319px" width="9" height="6" viewBox="0 0 9 6"><path d="M1 5L4.5 1.5L8 5" fill="none" stroke="#606060" stroke-width="1.6"/></svg>
<svg class="a" style="left:648px;top:801px" width="9" height="6" viewBox="0 0 9 6"><path d="M1 1L4.5 4.5L8 1" fill="none" stroke="#606060" stroke-width="1.6"/></svg>
<div class="a" style="left:662px;top:313px;width:1px;height:499px;background:#f0f0f0"></div>
<div class="a" style="left:663px;top:337px;width:948px;height:475px;overflow:hidden">

<div class="row" style="left:0;top:-8px"><svg width="13" height="17" viewBox="0 0 13 17"><path d="M0.5 0.5H8.5L12.5 4.5V16.5H0.5Z" fill="#fff" stroke="#8c8c8c"/><path d="M8.5 0.5V4.5H12.5" fill="none" stroke="#8c8c8c"/><rect x="1.5" y="2" width="7" height="13.5" fill="#f3f3f3"/><circle cx="5" cy="7.5" r="3" fill="none" stroke="#9a9a9a" stroke-width="0.8" stroke-dasharray="1.2 0.8"/><circle cx="8" cy="10.5" r="2.2" fill="#d8ecfb" stroke="#6fb3e8" stroke-width="0.8"/></svg><span class="n">gta-streaming-five.dll</span><span class="d">31. 05. 2020 21:07</span><span class="v">Razširitev programa</span><span class="s">634 KB</span></div>

<div class="row" style="left:0;top:13px"><svg width="13" height="17" viewBox="0 0 13 17"><path d="M0.5 0.5H8.5L12.5 4.5V16.5H0.5Z" fill="#fff" stroke="#8c8c8c"/><path d="M8.5 0.5V4.5H12.5" fill="none" stroke="#8c8c8c"/><rect x="1.5" y="2" width="7" height="13.5" fill="#f3f3f3"/><circle cx="5" cy="7.5" r="3" fill="none" stroke="#9a9a9a" stroke-width="0.8" stroke-dasharray="1.2 0.8"/><circle cx="8" cy="10.5" r="2.2" fill="#d8ecfb" stroke="#6fb3e8" stroke-width="0.8"/></svg><span class="n">handling-loader-five.dll</span><span class="d">31. 05. 2020 21:07</span><span class="v">Razširitev programa</span><span class="s">273 KB</span></div>

<div class="row" style="left:0;top:34px"><svg width="13" height="17" viewBox="0 0 13 17"><path d="M0.5 0.5H8.5L12.5 4.5V16.5H0.5Z" fill="#fff" stroke="#8c8c8c"/><path d="M8.5 0.5V4.5H12.5" fill="none" stroke="#8c8c8c"/><rect x="1.5" y="2" width="7" height="13.5" fill="#f3f3f3"/><circle cx="5" cy="7.5" r="3" fill="none" stroke="#9a9a9a" stroke-width="0.8" stroke-dasharray="1.2 0.8"/><circle cx="8" cy="10.5" r="2.2" fill="#d8ecfb" stroke="#6fb3e8" stroke-width="0.8"/></svg><span class="n">http-client.dll</span><span class="d">31. 05. 2020 21:07</span><span class="v">Razširitev programa</span><span class="s">187 KB</span></div>

<div class="row" style="left:0;top:55px"><svg width="13" height="17" viewBox="0 0 13 17"><path d="M0.5 0.5H8.5L12.5 4.5V16.5H0.5Z" fill="#fff" stroke="#8c8c8c"/><path d="M8.5 0.5V4.5H12.5" fill="none" stroke="#8c8c8c"/><rect x="1.5" y="2" width="7" height="13.5" fill="#f3f3f3"/><circle cx="5" cy="7.5" r="3" fill="none" stroke="#9a9a9a" stroke-width="0.8" stroke-dasharray="1.2 0.8"/><circle cx="8" cy="10.5" r="2.2" fill="#d8ecfb" stroke="#6fb3e8" stroke-width="0.8"/></svg><span class="n">imgui.dll</span><span class="d">31. 05. 2020 21:07</span><span class="v">Razširitev programa</span><span class="s">650 KB</span></div>

<div class="row" style="left:0;top:76px"><svg width="13" height="17" viewBox="0 0 13 17"><path d="M0.5 0.5H8.5L12.5 4.5V16.5H0.5Z" fill="#fff" stroke="#8c8c8c"/><path d="M8.5 0.5V4.5H12.5" fill="none" stroke="#8c8c8c"/><rect x="1.5" y="2" width="7" height="13.5" fill="#f3f3f3"/><circle cx="5" cy="7.5" r="3" fill="none" stroke="#9a9a9a" stroke-width="0.8" stroke-dasharray="1.2 0.8"/><circle cx="8" cy="10.5" r="2.2" fill="#d8ecfb" stroke="#6fb3e8" stroke-width="0.8"/></svg><span class="n">ipfsdl.dll</span><span class="d">31. 05. 2020 21:07</span><span class="v">Razširitev programa</span><span class="s">4.155 KB</span></div>

<div class="row" style="left:0;top:97px"><svg width="13" height="17" viewBox="0 0 13 17"><path d="M0.5 0.5H8.5L12.5 4.5V16.5H0.5Z" fill="#fff" stroke="#8c8c8c"/><path d="M8.5 0.5V4.5H12.5" fill="none" stroke="#8c8c8c"/><rect x="1.5" y="2" width="7" height="13.5" fill="#f3f3f3"/><circle cx="5" cy="7.5" r="3" fill="none" stroke="#9a9a9a" stroke-width="0.8" stroke-dasharray="1.2 0.8"/><circle cx="8" cy="10.5" r="2.2" fill="#d8ecfb" stroke="#6fb3e8" stroke-width="0.8"/></svg><span class="n">legacy-game-re3.dll</span><span class="d">31. 05. 2020 21:07</span><span class="v">Razširitev programa</span><span class="s">3.502 KB</span></div>

<div class="row" style="left:0;top:118px"><svg width="13" height="17" viewBox="0 0 13 17"><path d="M0.5 0.5H8.5L12.5 4.5V16.5H0.5Z" fill="#fff" stroke="#8c8c8c"/><path d="M8.5 0.5V4.5H12.5" fill="none" stroke="#8c8c8c"/><rect x="1.5" y="2" width="7" height="13.5" fill="#f3f3f3"/><circle cx="5" cy="7.5" r="3" fill="none" stroke="#9a9a9a" stroke-width="0.8" stroke-dasharray="1.2 0.8"/><circle cx="8" cy="10.5" r="2.2" fill="#d8ecfb" stroke="#6fb3e8" stroke-width="0.8"/></svg><span class="n">libuv.dll</span><span class="d">31. 05. 2020 21:07</span><span class="v">Razširitev programa</span><span class="s">193 KB</span></div>

<div class="row" style="left:0;top:139px"><svg width="13" height="17" viewBox="0 0 13 17"><path d="M0.5 0.5H8.5L12.5 4.5V16.5H0.5Z" fill="#fff" stroke="#8c8c8c"/><path d="M8.5 0.5V4.5H12.5" fill="none" stroke="#8c8c8c"/><rect x="1.5" y="2" width="7" height="13.5" fill="#f3f3f3"/><circle cx="5" cy="7.5" r="3" fill="none" stroke="#9a9a9a" stroke-width="0.8" stroke-dasharray="1.2 0.8"/><circle cx="8" cy="10.5" r="2.2" fill="#d8ecfb" stroke="#6fb3e8" stroke-width="0.8"/></svg><span class="n">loading-screens-five.dll</span><span class="d">31. 05. 2020 21:07</span><span class="v">Razširitev programa</span><span class="s">460 KB</span></div>

<div class="row" style="left:0;top:160px"><svg width="13" height="17" viewBox="0 0 13 17"><path d="M0.5 0.5H8.5L12.5 4.5V16.5H0.5Z" fill="#fff" stroke="#8c8c8c"/><path d="M8.5 0.5V4.5H12.5" fill="none" stroke="#8c8c8c"/><rect x="1.5" y="2" width="7" height="13.5" fill="#f3f3f3"/><circle cx="5" cy="7.5" r="3" fill="none" stroke="#9a9a9a" stroke-width="0.8" stroke-dasharray="1.2 0.8"/><circle cx="8" cy="10.5" r="2.2" fill="#d8ecfb" stroke="#6fb3e8" stroke-width="0.8"/></svg><span class="n">lovely-script.dll</span><span class="d">31. 05. 2020 21:07</span><span class="v">Razširitev programa</span><span class="s">126 KB</span></div>

<div class="row" style="left:0;top:181px"><svg width="13" height="17" viewBox="0 0 13 17"><path d="M0.5 0.5H8.5L12.5 4.5V16.5H0.5Z" fill="#fff" stroke="#8c8c8c"/><path d="M8.5 0.5V4.5H12.5" fill="none" stroke="#8c8c8c"/><rect x="1.5" y="2" width="7" height="13.5" fill="#f3f3f3"/><circle cx="5" cy="7.5" r="3" fill="none" stroke="#9a9a9a" stroke-width="0.8" stroke-dasharray="1.2 0.8"/><circle cx="8" cy="10.5" r="2.2" fill="#d8ecfb" stroke="#6fb3e8" stroke-width="0.8"/></svg><span class="n">mojo.dll</span><span class="d">31. 05. 2020 21:07</span><span class="v">Razširitev programa</span><span class="s">3.265 KB</span></div>

<div class="row" style="left:0;top:202px"><svg width="13" height="17" viewBox="0 0 13 17"><path d="M0.5 0.5H8.5L12.5 4.5V16.5H0.5Z" fill="#fff" stroke="#8c8c8c"/><path d="M8.5 0.5V4.5H12.5" fill="none" stroke="#8c8c8c"/><rect x="1.5" y="2" width="7" height="13.5" fill="#f3f3f3"/><circle cx="5" cy="7.5" r="3" fill="none" stroke="#9a9a9a" stroke-width="0.8" stroke-dasharray="1.2 0.8"/><circle cx="8" cy="10.5" r="2.2" fill="#d8ecfb" stroke="#6fb3e8" stroke-width="0.8"/></svg><span class="n">msobj140.dll</span><span class="d">31. 05. 2020 21:07</span><span class="v">Razširitev programa</span><span class="s">138 KB</span></div>

<div class="row" style="left:0;top:223px"><svg width="13" height="17" viewBox="0 0 13 17"><path d="M0.5 0.5H8.5L12.5 4.5V16.5H0.5Z" fill="#fff" stroke="#8c8c8c"/><path d="M8.5 0.5V4.5H12.5" fill="none" stroke="#8c8c8c"/><rect x="1.5" y="2" width="7" height="13.5" fill="#f3f3f3"/><circle cx="5" cy="7.5" r="3" fill="none" stroke="#9a9a9a" stroke-width="0.8" stroke-dasharray="1.2 0.8"/><circle cx="8" cy="10.5" r="2.2" fill="#d8ecfb" stroke="#6fb3e8" stroke-width="0.8"/></svg><span class="n">mspdbcore.dll</span><span class="d">31. 05. 2020 21:07</span><span class="v">Razširitev programa</span><span class="s">625 KB</span></div>
<div class="row" style="left:16px;top:244px;width:598px;background:#e5f3ff;"></div>
<div class="row" style="left:0;top:244px"><svg width="13" height="17" viewBox="0 0 13 17"><path d="M0.5 0.5H8.5L12.5 4.5V16.5H0.5Z" fill="#fff" stroke="#8c8c8c"/><path d="M8.5 0.5V4.5H12.5" fill="none" stroke="#8c8c8c"/><rect x="1.5" y="2" width="7" height="13.5" fill="#f3f3f3"/><circle cx="5" cy="7.5" r="3" fill="none" stroke="#9a9a9a" stroke-width="0.8" stroke-dasharray="1.2 0.8"/><circle cx="8" cy="10.5" r="2.2" fill="#d8ecfb" stroke="#6fb3e8" stroke-width="0.8"/></svg><span class="n">n19ui.dll</span><span class="d">31. 05. 2020 21:07</span><span class="v">Razširitev programa</span><span class="s">63 KB</span></div>

<div class="row" style="left:0;top:265px"><svg width="13" height="17" viewBox="0 0 13 17"><path d="M0.5 0.5H8.5L12.5 4.5V16.5H0.5Z" fill="#fff" stroke="#8c8c8c"/><path d="M8.5 0.5V4.5H12.5" fill="none" stroke="#8c8c8c"/><rect x="1.5" y="2" width="7" height="13.5" fill="#f3f3f3"/><circle cx="5" cy="7.5" r="3" fill="none" stroke="#9a9a9a" stroke-width="0.8" stroke-dasharray="1.2 0.8"/><circle cx="8" cy="10.5" r="2.2" fill="#d8ecfb" stroke="#6fb3e8" stroke-width="0.8"/></svg><span class="n">net.dll</span><span class="d">31. 05. 2020 21:07</span><span class="v">Razširitev programa</span><span class="s">680 KB</span></div>

<div class="row" style="left:0;top:286px"><svg width="13" height="17" viewBox="0 0 13 17"><path d="M0.5 0.5H8.5L12.5 4.5V16.5H0.5Z" fill="#fff" stroke="#8c8c8c"/><path d="M8.5 0.5V4.5H12.5" fill="none" stroke="#8c8c8c"/><rect x="1.5" y="2" width="7" height="13.5" fill="#f3f3f3"/><circle cx="5" cy="7.5" r="3" fill="none" stroke="#9a9a9a" stroke-width="0.8" stroke-dasharray="1.2 0.8"/><circle cx="8" cy="10.5" r="2.2" fill="#d8ecfb" stroke="#6fb3e8" stroke-width="0.8"/></svg><span class="n">net-base.dll</span><span class="d">31. 05. 2020 21:07</span><span class="v">Razširitev programa</span><span class="s">156 KB</span></div>

<div class="row" style="left:0;top:307px"><svg width="13" height="17" viewBox="0 0 13 17"><path d="M0.5 0.5H8.5L12.5 4.5V16.5H0.5Z" fill="#fff" stroke="#8c8c8c"/><path d="M8.5 0.5V4.5H12.5" fill="none" stroke="#8c8c8c"/><rect x="1.5" y="2" width="7" height="13.5" fill="#f3f3f3"/><circle cx="5" cy="7.5" r="3" fill="none" stroke="#9a9a9a" stroke-width="0.8" stroke-dasharray="1.2 0.8"/><circle cx="8" cy="10.5" r="2.2" fill="#d8ecfb" stroke="#6fb3e8" stroke-width="0.8"/></svg><span class="n">net-http-server.dll</span><span class="d">31. 05. 2020 21:07</span><span class="v">Razširitev programa</span><span class="s">301 KB</span></div>

<div class="row" style="left:0;top:328px"><svg width="13" height="17" viewBox="0 0 13 17"><path d="M0.5 0.5H8.5L12.5 4.5V16.5H0.5Z" fill="#fff" stroke="#8c8c8c"/><path d="M8.5 0.5V4.5H12.5" fill="none" stroke="#8c8c8c"/><rect x="1.5" y="2" width="7" height="13.5" fill="#f3f3f3"/><circle cx="5" cy="7.5" r="3" fill="none" stroke="#9a9a9a" stroke-width="0.8" stroke-dasharray="1.2 0.8"/><circle cx="8" cy="10.5" r="2.2" fill="#d8ecfb" stroke="#6fb3e8" stroke-width="0.8"/></svg><span class="n">net-tcp-server.dll</span><span class="d">31. 05. 2020 21:07</span><span class="v">Razširitev programa</span><span class="s">482 KB</span></div>

<div class="row" style="left:0;top:349px"><svg width="13" height="17" viewBox="0 0 13 17"><path d="M0.5 0.5H8.5L12.5 4.5V16.5H0.5Z" fill="#fff" stroke="#8c8c8c"/><path d="M8.5 0.5V4.5H12.5" fill="none" stroke="#8c8c8c"/><rect x="1.5" y="2" width="7" height="13.5" fill="#f3f3f3"/><circle cx="5" cy="7.5" r="3" fill="none" stroke="#9a9a9a" stroke-width="0.8" stroke-dasharray="1.2 0.8"/><circle cx="8" cy="10.5" r="2.2" fill="#d8ecfb" stroke="#6fb3e8" stroke-width="0.8"/></svg><span class="n">nng.dll</span><span class="d">31. 05. 2020 21:07</span><span class="v">Razširitev programa</span><span class="s">183 KB</span></div>

<div class="row" style="left:0;top:370px"><svg width="13" height="17" viewBox="0 0 13 17"><path d="M0.5 0.5H8.5L12.5 4.5V16.5H0.5Z" fill="#fff" stroke="#8c8c8c"/><path d="M8.5 0.5V4.5H12.5" fill="none" stroke="#8c8c8c"/><rect x="1.5" y="2" width="7" height="13.5" fill="#f3f3f3"/><circle cx="5" cy="7.5" r="3" fill="none" stroke="#9a9a9a" stroke-width="0.8" stroke-dasharray="1.2 0.8"/><circle cx="8" cy="10.5" r="2.2" fill="#d8ecfb" stroke="#6fb3e8" stroke-width="0.8"/></svg><span class="n">nui-core.dll</span><span class="d">31. 05. 2020 21:07</span><span class="v">Razširitev programa</span><span class="s">1.043 KB</span></div>

<div class="row" style="left:0;top:391px"><svg width="13" height="17" viewBox="0 0 13 17"><path d="M0.5 0.5H8.5L12.5 4.5V16.5H0.5Z" fill="#fff" stroke="#8c8c8c"/><path d="M8.5 0.5V4.5H12.5" fill="none" stroke="#8c8c8c"/><rect x="1.5" y="2" width="7" height="13.5" fill="#f3f3f3"/><circle cx="5" cy="7.5" r="3" fill="none" stroke="#9a9a9a" stroke-width="0.8" stroke-dasharray="1.2 0.8"/><circle cx="8" cy="10.5" r="2.2" fill="#d8ecfb" stroke="#6fb3e8" stroke-width="0.8"/></svg><span class="n">nui-gsclient.dll</span><span class="d">31. 05. 2020 21:07</span><span class="v">Razširitev programa</span><span class="s">270 KB</span></div>

<div class="row" style="left:0;top:412px"><svg width="13" height="17" viewBox="0 0 13 17"><path d="M0.5 0.5H8.5L12.5 4.5V16.5H0.5Z" fill="#fff" stroke="#8c8c8c"/><path d="M8.5 0.5V4.5H12.5" fill="none" stroke="#8c8c8c"/><rect x="1.5" y="2" width="7" height="13.5" fill="#f3f3f3"/><circle cx="5" cy="7.5" r="3" fill="none" stroke="#9a9a9a" stroke-width="0.8" stroke-dasharray="1.2 0.8"/><circle cx="8" cy="10.5" r="2.2" fill="#d8ecfb" stroke="#6fb3e8" stroke-width="0.8"/></svg><span class="n">nui-profiles.dll</span><span class="d">31. 05. 2020 21:07</span><span class="v">Razširitev programa</span><span class="s">184 KB</span></div>

<div class="row" style="left:0;top:433px"><svg width="13" height="17" viewBox="0 0 13 17"><path d="M0.5 0.5H8.5L12.5 4.5V16.5H0.5Z" fill="#fff" stroke="#8c8c8c"/><path d="M8.5 0.5V4.5H12.5" fill="none" stroke="#8c8c8c"/><rect x="1.5" y="2" width="7" height="13.5" fill="#f3f3f3"/><circle cx="5" cy="7.5" r="3" fill="none" stroke="#9a9a9a" stroke-width="0.8" stroke-dasharray="1.2 0.8"/><circle cx="8" cy="10.5" r="2.2" fill="#d8ecfb" stroke="#6fb3e8" stroke-width="0.8"/></svg><span class="n">nui-resources.dll</span><span class="d">31. 05. 2020 21:07</span><span class="v">Razširitev programa</span><span class="s">566 KB</span></div>

<div class="row" style="left:0;top:454px"><svg width="13" height="17" viewBox="0 0 13 17"><path d="M0.5 0.5H8.5L12.5 4.5V16.5H0.5Z" fill="#fff" stroke="#8c8c8c"/><path d="M8.5 0.5V4.5H12.5" fill="none" stroke="#8c8c8c"/><rect x="1.5" y="2" width="7" height="13.5" fill="#f3f3f3"/><circle cx="5" cy="7.5" r="3" fill="none" stroke="#9a9a9a" stroke-width="0.8" stroke-dasharray="1.2 0.8"/><circle cx="8" cy="10.5" r="2.2" fill="#d8ecfb" stroke="#6fb3e8" stroke-width="0.8"/></svg><span class="n">OwnershipUI.dll</span><span class="d">31. 05. 2020 21:07</span><span class="v">Razširitev programa</span><span class="s">1.218 KB</span></div>
</div>
<div class="t" style="left:682px;top:319px;color:#4c607a">Ime</div>
<svg class="a" style="left:803px;top:312px" width="9" height="5" viewBox="0 0 9 5"><path d="M0.8 4.5L4.5 0.8L8.2 4.5" fill="none" stroke="#666" stroke-width="1"/></svg>
<div class="t" style="left:943px;top:319px;color:#4c607a">Datum spremembe</div>
<div class="t" style="left:1087px;top:319px;color:#4c607a">Vrsta</div>
<div class="t" style="left:1207px;top:319px;color:#4c607a">Velikost</div>
<div class="a" style="left:936px;top:313px;width:1px;height:25px;background:#e5e5e5"></div>
<div class="a" style="left:1080px;top:313px;width:1px;height:25px;background:#e5e5e5"></div>
<div class="a" style="left:1200px;top:313px;width:1px;height:25px;background:#e5e5e5"></div>
<div class="a" style="left:1280px;top:313px;width:1px;height:25px;background:#e5e5e5"></div>
<div class="a" style="left:1611px;top:313px;width:16px;height:499px;background:#f0f0f0"></div>
<div class="a" style="left:1611px;top:585px;width:16px;height:101px;background:#cdcdcd"></div>
<svg class="a" style="left:1615px;top:319px" width="9" height="6" viewBox="0 0 9 6"><path d="M1 5L4.5 1.5L8 5" fill="none" stroke="#606060" stroke-width="1.6"/></svg>
<svg class="a" style="left:1615px;top:801px" width="9" height="6" viewBox="0 0 9 6"><path d="M1 1L4.5 4.5L8 1" fill="none" stroke="#606060" stroke-width="1.6"/></svg>
<div class="a" style="left:820px;top:605px;width:195px;height:80px;background:#fff;border:1px solid #767676;box-shadow:2px 2px 3px rgba(0,0,0,0.3)"></div>
<div class="t" style="left:826px;top:608px;color:#575757;letter-spacing:-0.08px">Opis datoteke: n19ui for FiveM</div>
<div class="t" style="left:826px;top:623px;color:#575757;letter-spacing:-0.05px">Podjetje: Cfx.re</div>
<div class="t" style="left:826px;top:638px;color:#575757;letter-spacing:-0.3px">Različica datoteke: 1.0.0.2525</div>
<div class="t" style="left:826px;top:653px;color:#575757;letter-spacing:-0.35px">Datum nastanka: 31. 05. 2020 21:07</div>
<div class="t" style="left:826px;top:668px;color:#575757;letter-spacing:-0.35px">Velikost: 63,0 KB</div>
<div class="t" style="left:519px;top:818px;color:#1e1e1e">Št. elementov: 103</div>
<div class="a" style="left:625px;top:818px;width:1px;height:13px;background:#e5e5e5"></div>
<div class="t" style="left:636px;top:818px;color:#1e1e1e">1 izbran element</div>
<div class="a" style="left:733px;top:818px;width:1px;height:13px;background:#e5e5e5"></div>
<div class="a" style="left:1579px;top:813px;width:22px;height:22px;background:#cce8ff;border:1px solid #99d1ff"></div>
<svg class="a" style="left:1583px;top:818px" width="15" height="14" viewBox="0 0 15 14"><rect x="0.5" y="0.5" width="3" height="3" fill="#fff" stroke="#777" stroke-width="0.8"/><rect x="0.5" y="5.5" width="3" height="3" fill="#fff" stroke="#777" stroke-width="0.8"/><rect x="0.5" y="10" width="3" height="3" fill="#e0392e"/><path d="M5 2h3M9 2h5M5 7h3M9 7h5M5 11.5h3M9 11.5h5" stroke="#555" stroke-width="1"/></svg>
<svg class="a" style="left:1604px;top:818px" width="18" height="14" viewBox="0 0 18 14"><rect x="0.5" y="0.5" width="17" height="12" fill="#fff" stroke="#888"/><rect x="2" y="2" width="14" height="9" fill="#7fb2e6"/><path d="M2 8Q9 5 16 9V11H2Z" fill="#3e6b4a"/></svg><svg class="a" style="left:0;top:1040px;overflow:hidden" width="1920" height="40" viewBox="0 1040 1920 40">
<defs><filter id="tbb" x="-20%" y="-100%" width="140%" height="300%"><feGaussianBlur stdDeviation="14 4"/></filter></defs>
<rect x="0" y="1040" width="1920" height="40" fill="#202020"/>
<polygon points="1534,1020 1902,1020 1912,1100 1541,1100" fill="#441c25" filter="url(#tbb)"/>
</svg>
<!-- start -->
<svg class="a" style="left:16px;top:1052px" width="17" height="16" viewBox="0 0 17 16"><path d="M0 2.3L6.8 1.4V7.4H0Z M7.6 1.3L17 0V7.4H7.6Z M0 8.2H6.8V14.3L0 13.4Z M7.6 8.2H17V15.8L7.6 14.6Z" fill="#fff"/></svg>
<!-- search box -->
<div class="a" style="left:48px;top:1040px;width:344px;height:40px;background:#f2f2f2;border-bottom:1px solid #c8c8c8"></div>
<svg class="a" style="left:59px;top:1051px" width="18" height="18" viewBox="0 0 18 18"><circle cx="11.2" cy="6.5" r="5" fill="none" stroke="#222" stroke-width="1.3"/><path d="M7.6 10L1.2 16.4" stroke="#222" stroke-width="1.4"/></svg>
<div class="a" style="left:88px;top:1052px;font-size:14.5px;line-height:17px;color:#2b2b2b">Tukaj vnesite izraz za iskanje</div>
<!-- task view -->
<svg class="a" style="left:407px;top:1052px" width="18" height="16" viewBox="0 0 18 16"><path d="M1 1.5H12M1 14.5H12" stroke="#fff" stroke-width="1"/><rect x="1.5" y="3.5" width="10" height="9" fill="none" stroke="#fff" stroke-width="1.1"/><path d="M15.5 0.5V3.5M15.5 7V15.5" stroke="#fff" stroke-width="1"/><rect x="14.3" y="3.8" width="2.6" height="2.6" fill="#fff"/></svg>
<!-- chrome -->
<svg class="a" style="left:455px;top:1048px" width="24" height="24" viewBox="0 0 48 48"><circle cx="24" cy="24" r="22" fill="#1da462"/><path d="M5 13A22 22 0 0 1 43 13L24 13L14.5 29.5Z" fill="#dd5144"/><path d="M43 13A22 22 0 0 1 24 46L33.5 29.5L24 13Z" fill="#ffcd46"/><circle cx="24" cy="24" r="10" fill="#f5f5f5"/><circle cx="24" cy="24" r="8" fill="#4c8bf5"/></svg>
<!-- explorer active -->
<div class="a" style="left:492px;top:1040px;width:48px;height:40px;background:#4a4a4a"></div>
<svg class="a" style="left:504px;top:1050px" width="23" height="19" viewBox="0 0 23 19"><path d="M0.5 1H8L9.5 2.5H22V18H0.5Z" fill="#f4b400"/><rect x="0.5" y="4" width="21.5" height="14" fill="#ffd75e"/><path d="M6 18V11H16V18H13V14H9V18Z" fill="#1e88e5"/></svg>
<!-- discord -->
<svg class="a" style="left:554px;top:1049px" width="26" height="26" viewBox="0 0 26 26"><rect x="1" y="1" width="20" height="19" rx="3" fill="#7289da"/><path d="M5 6Q8 4.5 9.5 5L10 6Q11 5.8 12 6L12.5 5Q14 4.5 17 6Q19 9.5 19 14Q17.5 15.5 15.5 15.8L14.5 14.5Q11 15.5 7.5 14.5L6.5 15.8Q4.5 15.5 3 14Q3 9.5 5 6Z" fill="#f2f2f2"/><circle cx="8.5" cy="10" r="1.4" fill="#7289da"/><circle cx="13.5" cy="10" r="1.4" fill="#7289da"/><circle cx="17" cy="17" r="7" fill="#e04545"/><text x="17" y="20.2" text-anchor="middle" font-family="Liberation Sans" font-size="9" fill="#fff">9+</text></svg>
<!-- fivem -->
<svg class="a" style="left:602px;top:1048px" width="24" height="24" viewBox="0 0 48 48"><rect width="48" height="48" fill="#f9883a"/><path d="M20 4H29L42 43H32.5Z" fill="#fff"/><path d="M18 4L28 4L17 43L6 43Z" fill="#fff"/><path d="M29.5 5L11 35M30.5 10L10 39" stroke="#f9883a" stroke-width="1.8"/></svg>
<!-- underlines -->
<div class="a" style="left:447px;top:1078px;width:40px;height:2px;background:#76b9ed"></div>
<div class="a" style="left:492px;top:1078px;width:48px;height:2px;background:#76b9ed"></div>
<div class="a" style="left:545px;top:1078px;width:40px;height:2px;background:#76b9ed"></div>
<div class="a" style="left:594px;top:1078px;width:40px;height:2px;background:#76b9ed"></div>
<!-- tray -->
<svg class="a" style="left:1668px;top:1056px" width="14" height="8" viewBox="0 0 14 8"><path d="M1 7L7 1.2L13 7" fill="none" stroke="#fff" stroke-width="1.1"/></svg>
<svg class="a" style="left:1692px;top:1051px" width="13" height="18" viewBox="0 0 13 18"><rect x="3.5" y="0.5" width="6" height="11" rx="3" fill="#fff"/><path d="M1 8.5Q1 13.5 6.5 13.5Q12 13.5 12 8.5M6.5 13.5V16.5M3.5 16.8H9.5" fill="none" stroke="#fff" stroke-width="1"/></svg>
<svg class="a" style="left:1714px;top:1053px" width="18" height="15" viewBox="0 0 18 15"><rect x="0.5" y="0.5" width="4" height="3.5" fill="none" stroke="#fff" stroke-width="0.9"/><path d="M2.5 4V11M0.5 11H3" stroke="#fff" stroke-width="0.9"/><rect x="4.5" y="2.5" width="12.5" height="8" fill="none" stroke="#fff" stroke-width="1"/><path d="M10.7 10.5V13.5M7 13.8H14.5" stroke="#fff" stroke-width="1"/></svg>
<svg class="a" style="left:1738px;top:1052px" width="18" height="15" viewBox="0 0 18 15"><path d="M0.8 5H3.5L7.5 1.2V13.8L3.5 10H0.8Z" fill="none" stroke="#fff" stroke-width="1"/><path d="M9.8 5.2Q11 7.5 9.8 9.8" fill="none" stroke="#fff" stroke-width="1"/><path d="M12 3.2Q14.3 7.5 12 11.8" fill="none" stroke="#aaa" stroke-width="1"/><path d="M14.3 1.2Q17.5 7.5 14.3 13.8" fill="none" stroke="#888" stroke-width="1"/></svg>
<div class="a" style="left:1768px;top:1054px;font-size:12px;line-height:14px;color:#fff">SLV</div>
<div class="a" style="left:1801px;top:1045px;width:60px;text-align:center;font-size:12px;line-height:14px;color:#fff">22:22</div>
<div class="a" style="left:1801px;top:1062px;width:60px;text-align:center;font-size:12px;line-height:14px;color:#fff;letter-spacing:-0.4px">31. 05. 2020</div>
<svg class="a" style="left:1878px;top:1051px" width="26" height="26" viewBox="0 0 26 26"><path d="M1 1.5H17.5V14H9L5 17.5V14H1Z" fill="#fff"/><path d="M4 5H14.5M4 8H14.5M4 11H11" stroke="#555" stroke-width="1"/><circle cx="16.5" cy="16.5" r="8" fill="#3a3a3a" stroke="#777" stroke-width="1"/><text x="16.8" y="20.8" text-anchor="middle" font-family="Liberation Sans" font-size="11" fill="#fff">1</text></svg>
<div class="a" style="left:1914px;top:1040px;width:1px;height:40px;background:#6a6a6a"></div>
</body></html>
